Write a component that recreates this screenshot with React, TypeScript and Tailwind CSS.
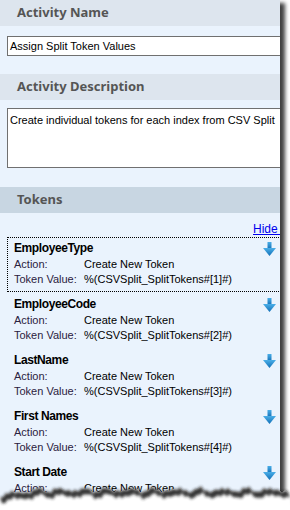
import React from 'react';

interface TokenItem {
  name: string;
  action: string;
  value: string;
}

const tokens: TokenItem[] = [
  { name: 'EmployeeType', action: 'Create New Token', value: '%(CSVSplit_SplitTokens#[1]#)' },
  { name: 'EmployeeCode', action: 'Create New Token', value: '%(CSVSplit_SplitTokens#[2]#)' },
  { name: 'LastName', action: 'Create New Token', value: '%(CSVSplit_SplitTokens#[3]#)' },
  { name: 'First Names', action: 'Create New Token', value: '%(CSVSplit_SplitTokens#[4]#)' },
  { name: 'Start Date', action: 'Create New Token', value: '%(CSVSplit_SplitTokens#[5]#)' },
];

const ArrowDown = () => (
  <svg width="13" height="14" viewBox="0 0 13 14" className="shrink-0">
    <defs>
      <linearGradient id="arr" x1="0" y1="0" x2="0" y2="1">
        <stop offset="0" stopColor="#4aaee8" />
        <stop offset="1" stopColor="#126fb6" />
      </linearGradient>
    </defs>
    <rect x="4.5" y="0" width="4" height="7" fill="url(#arr)" />
    <polygon points="0,6 13,6 6.5,14" fill="url(#arr)" />
  </svg>
);

// jagged bottom edge of the torn screenshot
const edge = (() => {
  const pts: [number, number][] = [];
  for (let x = 0; x <= 290; x += 3) {
    const lift = x < 40 ? (40 - x) * 0.12 : 0;
    const y = 10 + lift + Math.sin(x * 0.9) * 1.6 + Math.sin(x * 0.27 + 1) * 1.8 + Math.cos(x * 1.7) * 0.9;
    pts.push([x, y]);
  }
  return pts;
})();

const TornEdge = () => {
  const line = edge.map(([x, y]) => `${x},${y.toFixed(1)}`).join(' ');
  const lower = [...edge]
    .reverse()
    .map(([x, y]) => `${x + 2},${(y + 6).toFixed(1)}`)
    .join(' ');
  return (
    <svg width="290" height="30" className="absolute left-0 bottom-0">
      <defs>
        <filter id="blur" x="-10%" y="-50%" width="120%" height="200%">
          <feGaussianBlur stdDeviation="1.4" />
        </filter>
      </defs>
      <polygon points={`0,30 ${line} 290,30`} fill="#ffffff" />
      <polygon points={`${line} ${lower}`} fill="#1f1f1f" filter="url(#blur)" opacity="0.9" />
    </svg>
  );
};

const SectionHeader = ({ title, dark }: { title: string; dark?: boolean }) => (
  <div
    className={`h-[26px] flex items-center pl-[17px] text-[13px] font-bold text-[#555555] ${
      dark ? 'bg-[#c8d6e2]' : 'bg-[#dde5ee]'
    }`}
    style={{ fontFamily: '"Noto Sans", "DejaVu Sans", sans-serif' }}
  >
    {title}
  </div>
);

export default function App() {
  return (
    <div
      className="w-[290px] h-[510px] bg-white overflow-hidden relative"
      style={{ fontFamily: '"Liberation Sans", Arial, sans-serif' }}
    >
      <div className="w-[280px] h-[500px] bg-[#eaf3fd] overflow-hidden shadow-[5px_3px_4px_rgba(0,0,0,0.75)]">
        <SectionHeader title="Activity Name" />
        <div className="pt-[10px] pb-[18px] pl-[7px]">
          <div className="w-[290px] h-[20px] bg-white border border-[#707070] text-[11px] text-black pl-[2px] flex items-center whitespace-nowrap">
            Assign Split Token Values
          </div>
        </div>

        <SectionHeader title="Activity Description" />
        <div className="pt-[8px] pb-[19px] pl-[7px]">
          <div className="w-[290px] h-[60px] bg-white border border-[#707070] text-[11px] text-black pl-[2px] pt-[3px] whitespace-nowrap">
            Create individual tokens for each index from CSV Split
          </div>
        </div>

        <SectionHeader title="Tokens" dark />
        <div className="pt-[9px] pl-[7px]">
          <div className="pl-[246px] h-[15px] leading-[15px] text-[12px] text-[#0000ee] underline whitespace-nowrap">
            Hide Details
          </div>
          <div>
            {tokens.map((t, i) => (
              <div
                key={t.name}
                className={`w-[290px] border py-[3px] pl-[6px] mb-[1.5px] leading-[15.5px] text-[11px] ${
                  i === 0 ? 'border-dotted border-black' : 'border-transparent'
                }`}
              >
                <div className="flex items-start w-[262px] justify-between">
                  <span className="font-bold text-[12px] text-black tracking-[-0.4px]">{t.name}</span>
                  <span className="mt-[1px]">
                    <ArrowDown />
                  </span>
                </div>
                <div className="flex whitespace-nowrap">
                  <span className="w-[70px] text-[#2a2140]">Action:</span>
                  <span className="text-black">{t.action}</span>
                </div>
                <div className="flex whitespace-nowrap">
                  <span className="w-[70px] text-[#2a2140]">Token Value:</span>
                  <span className="text-black">{t.value}</span>
                </div>
              </div>
            ))}
          </div>
        </div>
      </div>
      <TornEdge />
    </div>
  );
}
